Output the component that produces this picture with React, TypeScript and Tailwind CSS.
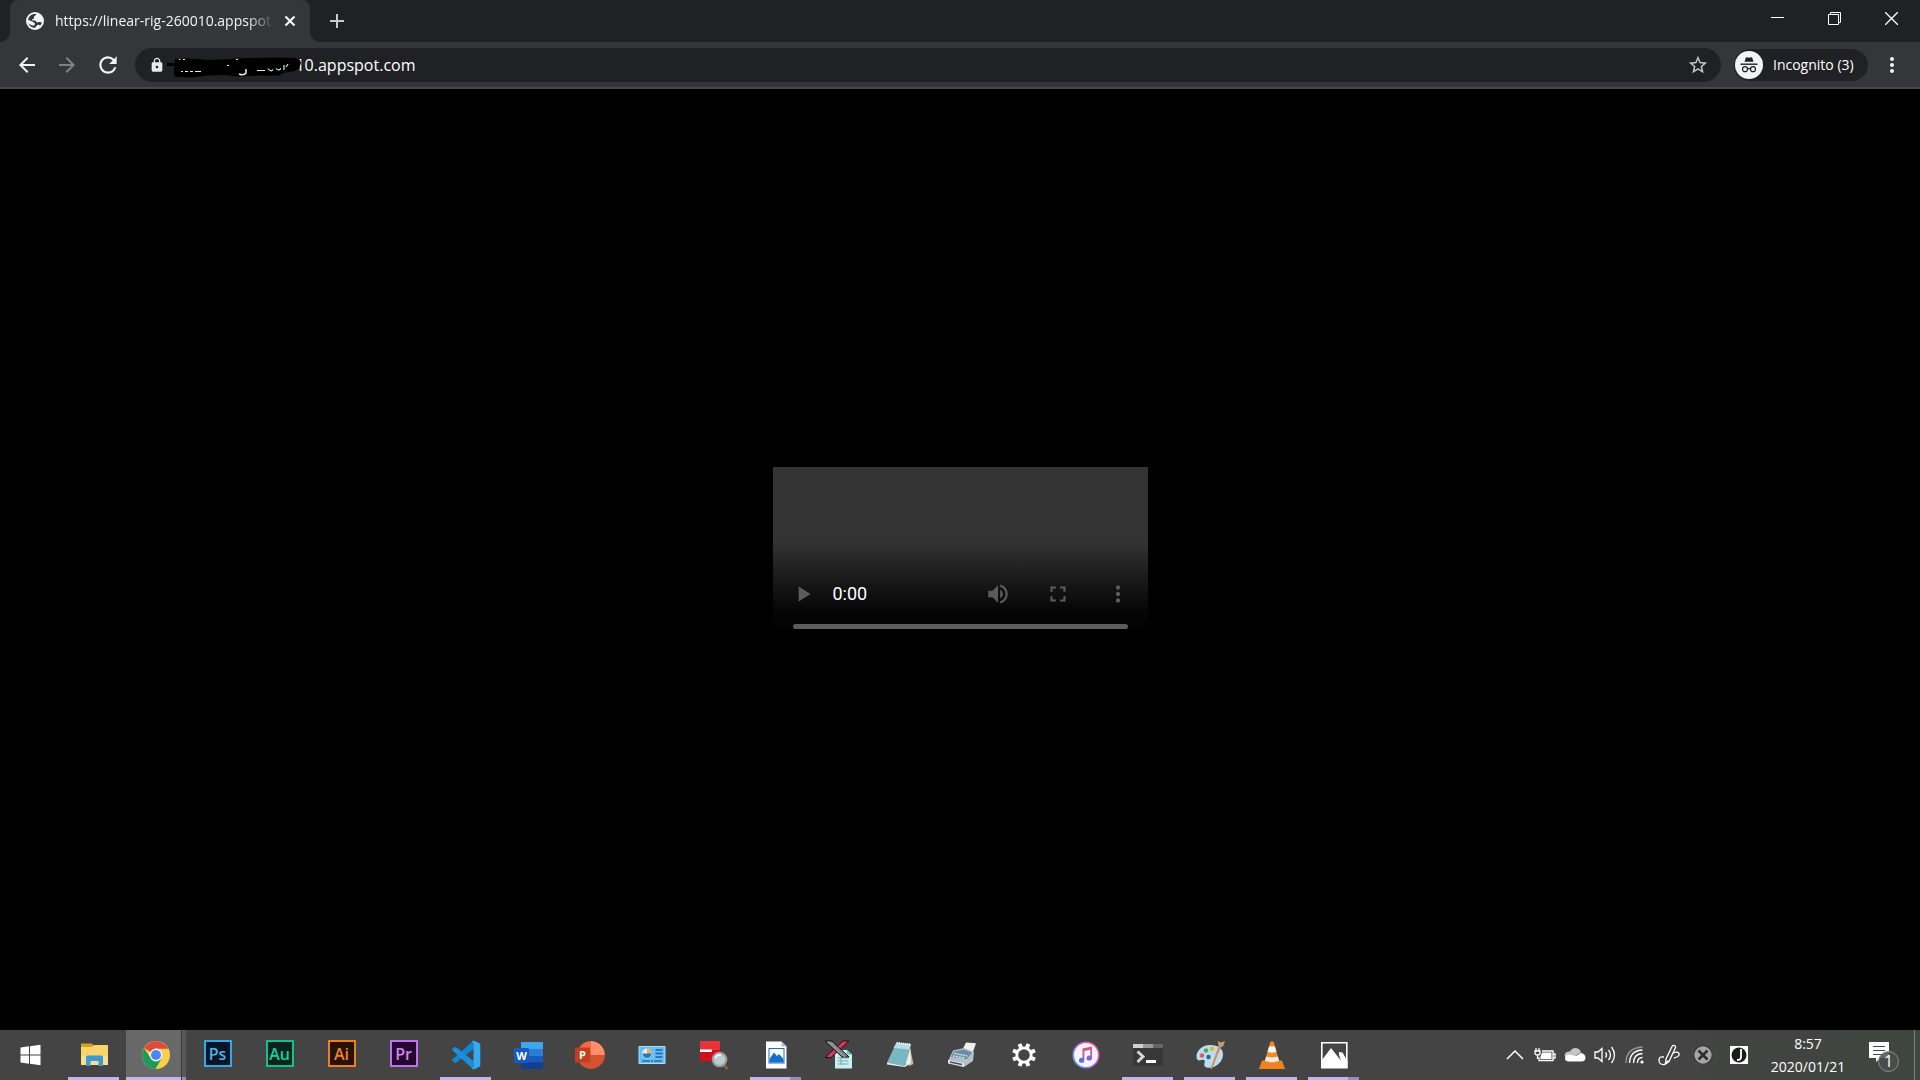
import type { ReactNode } from "react";
import {
  MdArrowBack,
  MdArrowForward,
  MdFullscreen,
  MdLock,
  MdMoreVert,
  MdPlayArrow,
  MdRefresh,
  MdStarBorder,
  MdVolumeUp,
} from "react-icons/md";

function TabCorner({ side }: { side: "left" | "right" }) {
  return (
    <span className="flex h-[10px] w-[10px] bg-[#35363a]">
      <span
        className={
          side === "left"
            ? "h-full w-full rounded-br-[10px] bg-[#202124]"
            : "h-full w-full rounded-bl-[10px] bg-[#202124]"
        }
      />
    </span>
  );
}

function GlobeIcon() {
  return (
    <svg viewBox="0 0 18 18" className="h-[18px] w-[18px] shrink-0">
      <circle cx="9" cy="9" r="9" fill="#f1f3f4" />
      <path
        d="M10.4 2.2c-.3 1.500-1.700 1.300-2.100 2.400-.3.9.4 1.300-.2 2-.6.600-1.900.2-2.100 1.200-.1.900 1.500.6 2.900.7 1.400.2 1 1.700 2.300 1.900 1.200.1 1.600-.5 2.600-.4.800.1 1.400.500 2.100.500-.3 1.200-1 2.300-1.900 3.100-.4-.8-1.100-1-1.900-.9-1 .2-1.300 1.300-2.100 1.800-.6.400-.9.900-.9 1.500-3-.1-5.600-1.900-6.500-4.500 1.600.3 3.500.4 4.400 1 .800.500 1.800.3 1.800-.6 0-1.200-1.700-1.200-2.300-1.800C5.700 9.300 3.700 8.500 2.100 8c.4-3 2.700-5.500 5.700-6 .8-.1 1.800-.1 2.600.2z"
        fill="#35363a"
      />
      <path d="M7.900 4.800l3.200-2.300 3.200 1.700 1.600 3.700-3.100.6-1.800-1.500-2.700.2z" fill="#f1f3f4" />
      <path d="M2.500 8.200l3.900 1.300 2.400 2-.8 2.200-3.300-.8-2.100-2z" fill="#f1f3f4" />
    </svg>
  );
}

function TabStrip() {
  return (
    <div className="flex h-[42px] bg-[#202124]">
      <div className="flex items-end">
        <TabCorner side="left" />
        <div className="flex h-full w-[300px] items-center rounded-t-lg bg-[#35363a] pl-4 pr-3">
          <GlobeIcon />
          <span className="ml-[11px] w-[219px] shrink-0 whitespace-nowrap text-sm text-[#f1f3f4] [mask-image:linear-gradient(to_right,black_88%,transparent)]">
            https://linear-rig-260010.appspot
          </span>
          <button aria-label="Close tab" className="ml-2 shrink-0 text-white">
            <svg viewBox="0 0 16 16" className="h-4 w-4">
              <path d="M3.500 3.500l9 9M12.500 3.500l-9 9" stroke="currentColor" strokeWidth="2" />
            </svg>
          </button>
        </div>
        <TabCorner side="right" />
      </div>
      <button aria-label="New tab" className="flex h-full w-[34px] items-center justify-center text-[#c8cacd]">
        <svg viewBox="0 0 16 16" className="h-4 w-4">
          <path d="M8 1v14M1 8h14" stroke="currentColor" strokeWidth="2" />
        </svg>
      </button>
      <div className="ml-auto flex h-[37px] text-white">
        <button aria-label="Minimize" className="flex w-[57px] items-center justify-center">
          <svg viewBox="0 0 13 13" className="h-[13px] w-[13px]">
            <path d="M0 5.500h13" stroke="currentColor" />
          </svg>
        </button>
        <button aria-label="Restore" className="flex w-[57px] items-center justify-center">
          <svg viewBox="0 0 13 13" className="h-[13px] w-[13px]" fill="none" stroke="currentColor">
            <path d="M.5 2.500h10v10H.5zM2.500 2.500v-2h10v10h-2" />
          </svg>
        </button>
        <button aria-label="Close" className="flex w-[57px] items-center justify-center">
          <svg viewBox="0 0 13 13" className="h-[13px] w-[13px]">
            <path d="M0 0l13 13M13 0L0 13" stroke="currentColor" strokeWidth="1.300" />
          </svg>
        </button>
      </div>
    </div>
  );
}

function IncognitoIcon() {
  return (
    <svg viewBox="0 0 28 28" className="h-7 w-7 shrink-0">
      <circle cx="14" cy="14" r="14" fill="#f1f3f4" />
      <path d="M9.500 10.800l1.300-4c.2-.6.700-.8 1.200-.6l2 .5 2-.5c.5-.2 1 0 1.200.6l1.300 4z" fill="#202124" />
      <path d="M5.500 13.200h17" stroke="#202124" strokeWidth="1.400" />
      <g fill="none" stroke="#202124" strokeWidth="1.200">
        <circle cx="10" cy="18.200" r="2.500" />
        <circle cx="18" cy="18.200" r="2.500" />
        <path d="M12.500 18c.8-.6 2.200-.6 3 0" />
      </g>
    </svg>
  );
}

function Toolbar() {
  return (
    <div className="flex h-[47px] items-center border-b-2 border-[#48494c] bg-[#35363a] pl-[15px] pr-4">
      <div className="flex gap-4">
        <button aria-label="Back" className="text-[#f1f3f4]">
          <MdArrowBack size={24} />
        </button>
        <button aria-label="Forward" className="text-[#7e8083]">
          <MdArrowForward size={24} />
        </button>
        <button aria-label="Reload" className="text-[#f1f3f4]">
          <MdRefresh size={26} />
        </button>
      </div>
      <div className="relative ml-[14px] flex h-[34px] flex-1 items-center rounded-full bg-[#202124] pl-[14px] pr-3">
        <MdLock size={16} className="shrink-0 text-[#e8eaed]" />
        <input
          aria-label="Address"
          defaultValue="linear-rig-260010.appspot.com"
          className="ml-[22px] min-w-0 flex-1 bg-transparent text-base text-white outline-none"
        />
        {/* marker strokes over the first part of the address */}
        <svg viewBox="0 0 140 24" className="absolute left-8 top-[6px] h-6 w-[140px]">
          <path
            d="M8 5l14-.5 18 1.500 26-1 14-1 30-.5 18 .5 5 2 1 3-2 5-4 3-12 2-4 2.500-34 .5-8 .5-12-1.500-18 .5-14 2-18-.5-1-4z"
            fill="#000"
          />
          <path d="M1 10.500h14M34 7l30 3" stroke="#000" strokeWidth="3" strokeLinecap="round" />
          <path
            d="M12 5.500h1.500M16 5.500h2M69 5.500h2M14 17.500h2M18 17.500h3M23 17.500h3M28 17.500h6M60 11.500h2M90 16.500h8M101 14.500q3 4 5 1M109 14.500q2 3 5 0M117 11v5M121 10l-2 3"
            stroke="#e8eaed"
            strokeWidth="1.200"
            fill="none"
          />
          <path d="M79 15v4q-2 3-7 1" stroke="#e8eaed" strokeWidth="1.500" fill="none" />
        </svg>
        <button aria-label="Bookmark this page" className="text-[#c8cacd]">
          <MdStarBorder size={22} />
        </button>
      </div>
      <button className="ml-[13px] flex h-8 w-[134px] items-center rounded-full bg-[#202124] pl-px text-sm text-white">
        <IncognitoIcon />
        <span className="ml-[10px] whitespace-nowrap">Incognito (3)</span>
      </button>
      <button aria-label="Menu" className="ml-3 text-[#f1f3f4]">
        <MdMoreVert size={24} />
      </button>
    </div>
  );
}

function VideoPlayer() {
  return (
    <section
      aria-label="Video player"
      className="flex h-[188px] w-[375px] flex-col justify-end bg-linear-to-b from-[#333] from-40% to-black pb-[26px]"
    >
      <div className="flex h-[60px] items-center text-[#5c5c5c]">
        <button aria-label="Play" className="flex h-full w-[60px] items-center justify-center">
          <MdPlayArrow size={26} />
        </button>
        <span className="font-['Roboto','Liberation_Sans',sans-serif] text-lg text-white">0:00</span>
        <button aria-label="Mute" className="ml-auto flex h-full w-[60px] items-center justify-center">
          <MdVolumeUp size={26} />
        </button>
        <button aria-label="Full screen" className="flex h-full w-[60px] items-center justify-center">
          <MdFullscreen size={26} />
        </button>
        <button aria-label="More options" className="flex h-full w-[60px] items-center justify-center">
          <MdMoreVert size={26} />
        </button>
      </div>
      <div className="mx-5 h-[5px] rounded-full bg-[#5c5c5c]" />
    </section>
  );
}

function AdobeIcon({ text, className }: { text: string; className: string }) {
  return (
    <span
      className={
        "mb-[3px] flex h-[27px] w-7 items-center justify-center border-2 font-['Open_Sans',sans-serif] text-base font-semibold leading-none " +
        className
      }
    >
      {text}
    </span>
  );
}

function Svg({ children }: { children: ReactNode }) {
  return (
    <svg viewBox="0 0 30 30" className="h-[30px] w-[30px]">
      {children}
    </svg>
  );
}

const startIcon = (
  <Svg>
    <path d="M4.500 7.500l8.500-1.200v8.200H4.500zM14 6.200l10.500-1.500v9.800H14zM4.500 15.500H13v8.200l-8.500-1.200zM14 15.500h10.500v9.800L14 23.800z" fill="#fff" />
  </Svg>
);

const explorerIcon = (
  <Svg>
    <path d="M2 3.500h11l2.500 3H29V14H2z" fill="#d9a01c" />
    <path d="M2 7h11l2-2h14v20H2z" fill="#f9d56b" />
    <path d="M2 16h27v9H2z" fill="#fbdf88" />
    <path d="M7 26V17q0-1.500 1.500-1.500h14Q24 15.500 24 17v9h-4.500v-5h-8v5z" fill="#3f97d3" />
  </Svg>
);

const chromeIcon = (
  <Svg>
    <circle cx="15" cy="15" r="14" fill="#f9cf4d" />
    <path d="M15 15L2.900 8A14 14 0 0 1 27.100 8L27.400 8.800H15z" fill="#dd4b3e" />
    <path d="M2.900 8A14 14 0 0 0 14.500 29L20.500 18.500 9.500 18z" fill="#1c9a58" />
    <circle cx="15" cy="15" r="6.400" fill="#f5f5f5" />
    <circle cx="15" cy="15" r="5" fill="#4a87f0" />
  </Svg>
);

const codeIcon = (
  <Svg>
    <path d="M22.500.500L1.500 19.500q-.8.800 0 1.500l2 1.700q.8.500 1.600 0L22.500 9z" fill="#1286d2" />
    <path d="M22.500 29.500L1.500 10.500q-.8-.8 0-1.500l2-1.700q.8-.5 1.600 0L22.500 21z" fill="#1a8fdc" />
    <path d="M22.500.500l6 2.800q.8.500.8 1.500v20.400q0 1-.8 1.500l-6 2.800-2-1.500q2 .5 2-1.500v-23q0-2-2-1.500z" fill="#35a9f2" />
  </Svg>
);

const wordIcon = (
  <Svg>
    <path d="M8 2h22v7H8z" fill="#41a5ee" />
    <path d="M8 9h22v7H8z" fill="#2b7cd3" />
    <path d="M8 16h22v6.500H8z" fill="#185abd" />
    <path d="M8 22.500h22V29H8z" fill="#103f91" />
    <rect x="1" y="8" width="15" height="15" rx="1" fill="#185abd" />
    <text x="8.500" y="19.500" textAnchor="middle" fontSize="11" fontWeight="700" fill="#fff">W</text>
  </Svg>
);

const pptIcon = (
  <Svg>
    <circle cx="16" cy="15" r="13.700" fill="#e2593b" />
    <path d="M16 1.300A13.700 13.700 0 0 1 29.700 15H16z" fill="#ff8f6b" />
    <path d="M2.300 15A13.700 13.700 0 0 1 16 1.300V15z" fill="#ed6c47" />
    <path d="M2.300 15h27.400A13.700 13.700 0 0 1 2.300 15z" fill="#d35230" />
    <rect x="0" y="7.500" width="15" height="15" rx="1" fill="#c43e1c" />
    <text x="7.500" y="19" textAnchor="middle" fontSize="11" fontWeight="700" fill="#fff">P</text>
  </Svg>
);

const controlPanelIcon = (
  <Svg>
    <rect x="2" y="6.500" width="26" height="17" fill="#69bdf0" stroke="#9fe0fb" />
    <circle cx="10" cy="13.500" r="5" fill="#d9f0fc" />
    <path d="M10 13.500V9a4.500 4.500 0 1 1-4.500 4.500z" fill="#2677bd" />
    <path d="M10 13.500V8.500a5 5 0 0 1 4.500 5z" fill="#e9b44c" />
    <path d="M18.500 10h7M18.500 13.500h7M18.500 17h7" stroke="#1465ad" strokeWidth="1.500" />
    <path d="M5 21h20" stroke="#2470ad" strokeWidth="1.500" strokeDasharray="8 1 2 1" />
  </Svg>
);

const redFinderIcon = (
  <Svg>
    <path d="M1 1h20v20H1z" fill="#d40e1d" />
    <path d="M1 1h20v9H1z" fill="#e8333c" />
    <path d="M1 9.500h12v2.500H1z" fill="#fff" />
    <path d="M23 23l5.500 6" stroke="#8a6246" strokeWidth="2.500" />
    <circle cx="20.500" cy="19.500" r="6.800" fill="#b9cbd0" stroke="#9b9d9f" strokeWidth="2" />
    <path d="M16 18q2-4 6-3" stroke="#edf5f6" strokeWidth="2" fill="none" />
  </Svg>
);

const imageFileIcon = (
  <Svg>
    <path d="M5 1.500h15.500l5 5v22H5z" fill="#fff" />
    <path d="M20.500 1.500l5 5h-5z" fill="#b9bcc0" />
    <rect x="8" y="8.500" width="15" height="14.500" fill="#fff" stroke="#1670cb" />
    <path d="M8.500 22.500v-3.500l4.500-6.500 3 3.500 2-2 4.500 5v3.500z" fill="#1670cb" />
  </Svg>
);

const xDocIcon = (
  <Svg>
    <path d="M12 10h12l5 4.500V28.500H12z" fill="#c9f0f3" />
    <path d="M24 10v4.500h5z" fill="#6fb7c4" />
    <path d="M14.500 18h11M14.500 21h11M14.500 24h11M18 17v8" stroke="#5c8d99" strokeWidth=".7" />
    <path d="M20 1h6L8 17.500H2z" fill="#f0305c" stroke="#151515" />
    <path d="M2 1h7l17 16h-7z" fill="#7d8585" stroke="#151515" />
    <path d="M5 1.500l17 15.500" stroke="#d0d5d5" strokeDasharray="1 1" />
  </Svg>
);

const notepadIcon = (
  <Svg>
    <path d="M24 3l4.500 21-4 2-5-4z" fill="#c9b58c" />
    <path d="M11.500 2.500L26 4l-6 22L2 22.500z" fill="#79b7c4" />
    <path d="M11.500 2.500L26 4l-1.500 5.500L8.500 8z" fill="#b9dce1" />
    <path d="M2 22.500L20 26l5.500-17.500L26 23l-6 4-18-2.500z" fill="#e4eff0" />
    <path d="M12 3l13 1.500" stroke="#eef6f6" strokeWidth="2" strokeDasharray="1 1" />
  </Svg>
);

const faxIcon = (
  <Svg>
    <path d="M19 2.500l10 .8-4 11.500-11-2z" fill="#eef2f4" />
    <path d="M6 10.500L17 8l10 4-1 9-9 6L1 21z" fill="#b4bfc6" />
    <path d="M7 11.500l10-2 8 3-5 6.500L4 17z" fill="#668ea9" />
    <path d="M7.500 13.500l13 2.500M6 16l12 2" stroke="#d5e7ef" strokeWidth="1.500" strokeDasharray="2 1" />
    <path d="M1 20l16 3v4L1 23.500z" fill="#dfe5e8" />
    <path d="M3 22l12 2.500" stroke="#4b5157" strokeWidth="1.500" />
  </Svg>
);

const settingsIcon = (
  <Svg>
    <circle cx="15" cy="15" r="7.200" fill="none" stroke="#fff" strokeWidth="2.800" />
    <path
      d="M17.800 8l1.700-4M12.200 8l-1.700-4M17.800 22l1.700 4M12.200 22l-1.700 4M8 12.200l-4-1.700M8 17.800l-4 1.700M22 12.200l4-1.700M22 17.800l4 1.700"
      stroke="#fff"
      strokeWidth="4"
    />
  </Svg>
);

const itunesIcon = (
  <Svg>
    <defs>
      <linearGradient id="ring" x1="1" y1="0" x2="0" y2="1">
        <stop offset="0" stopColor="#f45579" />
        <stop offset=".5" stopColor="#b45de0" />
        <stop offset="1" stopColor="#3cb4ef" />
      </linearGradient>
      <linearGradient id="note" x1="0" y1="0" x2="0" y2="1">
        <stop offset="0" stopColor="#f04e78" />
        <stop offset="1" stopColor="#5870e8" />
      </linearGradient>
    </defs>
    <circle cx="15" cy="15" r="12.800" fill="#f6f4fa" stroke="url(#ring)" strokeWidth="1.600" />
    <path
      d="M11.500 8.500l9.500-2v11.500a2.700 2.500 0 1 1-1.700-2.300v-6l-6 1.300v9.200a2.700 2.500 0 1 1-1.800-2.300z"
      fill="url(#note)"
    />
  </Svg>
);

const terminalIcon = (
  <Svg>
    <path d="M0 4h30v22H0z" fill="#383838" />
    <path d="M0 4h10v4H0z" fill="#d0d0d0" />
    <path d="M10 4h10v4H10z" fill="#9a9a9a" />
    <path d="M20 4h10v4H20z" fill="#666" />
    <path d="M4.500 11.500l5.500 5-5.500 5.500" fill="none" stroke="#d5d5d5" strokeWidth="3" />
    <path d="M13 21.500h10" stroke="#fff" strokeWidth="3" />
  </Svg>
);

const paintIcon = (
  <Svg>
    <path
      d="M15 5C7 5 1 11 1.500 17.500c.2 3 3 3.500 5 2.500 2.500-1 4 .5 3 3-1 3 1 5 5 4.800C22 27.500 28.500 21 28 13.500 27.500 8 22 5 15 5z"
      fill="#b9def3"
    />
    <circle cx="7" cy="15.500" r="2.200" fill="#e35b4f" />
    <circle cx="11" cy="10.500" r="2.300" fill="#4dad5b" />
    <circle cx="17" cy="8.800" r="2.300" fill="#e5b62d" />
    <circle cx="13.500" cy="17" r="2.200" fill="#355e91" />
    <path d="M15.500 28.500L23.500 6l2.500 1-9 22z" fill="#d98e4d" />
    <path d="M23 1l3 1.500L30 1l-2 5.500-4.500 1z" fill="#c89a72" />
  </Svg>
);

const vlcIcon = (
  <Svg>
    <path d="M5 20.500h20L28 29H2z" fill="#f18220" />
    <path d="M13.500 1.500h3L22.500 22q-7.500 3.500-15 0z" fill="#f58b1f" />
    <path d="M12.100 6.500h5.800l1.600 5.300q-4.500 1.800-9 0z" fill="#f4f4f4" />
    <path d="M9.200 16.500q5.800 2 11.600 0l1.300 4.300q-7 2.800-14.200 0z" fill="#e9ecec" />
  </Svg>
);

const photosIcon = (
  <Svg>
    <path d="M2.800 2.800h25v25h-25z" fill="none" stroke="#fff" strokeWidth="1.600" />
    <path d="M3 20L12 8l7.500 9.500.5-5.500 3.500.5 5 8.500v7H3z" fill="#fff" />
    <path d="M17.500 14.500l2-1.500 2.500 8z" fill="#494949" />
  </Svg>
);

type TaskApp = { name: string; icon: ReactNode; open?: boolean; stacked?: boolean; active?: boolean };

const apps: TaskApp[] = [
  { name: "File Explorer", icon: explorerIcon, open: true },
  { name: "Google Chrome", icon: chromeIcon, active: true },
  { name: "Photoshop", icon: <AdobeIcon text="Ps" className="border-[#35a8e0] bg-[#071527] text-[#4cb5e9]" /> },
  { name: "Audition", icon: <AdobeIcon text="Au" className="border-[#12c08d] bg-[#06231d] text-[#13d39a]" /> },
  { name: "Illustrator", icon: <AdobeIcon text="Ai" className="border-[#ef7f1a] bg-[#251307] text-[#f18322]" /> },
  { name: "Premiere Pro", icon: <AdobeIcon text="Pr" className="border-[#bd74e8] bg-[#25082f] text-[#cf87ef]" /> },
  { name: "Visual Studio Code", icon: codeIcon, open: true },
  { name: "Word", icon: wordIcon },
  { name: "PowerPoint", icon: pptIcon },
  { name: "Control Panel", icon: controlPanelIcon },
  { name: "Finder", icon: redFinderIcon },
  { name: "Image Viewer", icon: imageFileIcon, open: true, stacked: true },
  { name: "Document Tool", icon: xDocIcon },
  { name: "Notepad", icon: notepadIcon },
  { name: "Fax and Scan", icon: faxIcon },
  { name: "Settings", icon: settingsIcon },
  { name: "iTunes", icon: itunesIcon },
  { name: "Terminal", icon: terminalIcon, open: true },
  { name: "Paint", icon: paintIcon, open: true },
  { name: "VLC", icon: vlcIcon, open: true },
  { name: "Photos", icon: photosIcon, open: true, stacked: true },
];

function TaskButton({ app }: { app: TaskApp }) {
  if (app.active) {
    return (
      <button aria-label={app.name} className="flex w-[62px] pl-[2px]">
        <span className="flex h-full w-14 flex-col items-center border-r border-[#3a3a3a] bg-[#686868]">
          <span className="flex flex-1 items-center pl-1 pt-[3px]">{app.icon}</span>
          <span className="h-[3px] w-full bg-[#c5b2ee]" />
        </span>
        <span className="flex h-full flex-1 flex-col justify-end bg-[#585858]">
          <span className="h-[3px] w-full bg-[#9a8cba]" />
        </span>
      </button>
    );
  }
  return (
    <button aria-label={app.name} className="flex w-[62px] flex-col items-center pl-px">
      <span className="flex flex-1 items-center pt-[3px]">{app.icon}</span>
      <span className="flex h-[3px] w-[51px]">
        {app.open && <span className="flex-1 bg-[#c5b2ee]" />}
        {app.stacked && <span className="w-[11px] bg-[#9a8cba]" />}
      </span>
    </button>
  );
}

function TrayButton({ name, children }: { name: string; children: ReactNode }) {
  return (
    <button aria-label={name} className="flex h-full w-[30px] items-center justify-center">
      <svg viewBox="0 0 22 22" className="h-[22px] w-[22px]" fill="none" stroke="#fff" strokeWidth="1.300">
        {children}
      </svg>
    </button>
  );
}

function Tray() {
  return (
    <div className="ml-auto flex items-center text-white">
      <TrayButton name="Show hidden icons">
        <path d="M3 15l8-8 8 8" strokeWidth="1.500" />
      </TrayButton>
      <TrayButton name="Battery">
        <path d="M5 13v3.500h14V7H8M19 10h2v4h-2" />
        <path d="M8 8.500h9.500v6.500H6.500V12.500z" fill="#fff" stroke="none" />
        <path d="M2 4v3M5 4v3M1 7h5v2q0 2-2.500 2T1 9zM3.500 11v4" />
      </TrayButton>
      <TrayButton name="OneDrive">
        <path d="M2 13q-2-1-1-3.500Q3 7 6 7.500 8 3.500 12 4t5 4.500L8 14z" fill="#c4c4c4" stroke="none" />
        <path d="M5 17.500q-4 0-4-3.500 0-3 4-3.500l7 1.500 5-3q4 .5 4.500 4.500 0 4-4 4z" fill="#fff" stroke="none" />
      </TrayButton>
      <TrayButton name="Volume">
        <path d="M1 8h3l4-3.500v13L4 14H1zM11.500 8.500q2 2.500 0 5M14.500 6q4 5 0 10M17.500 3q6 8 0 16" />
      </TrayButton>
      <div className="mr-1 h-full">
        <TrayButton name="Wi-Fi">
          <circle cx="18" cy="18" r="1.600" fill="#fff" stroke="none" />
          <path d="M13.500 19q0-5.500 5-5.500M9.500 19q0-9 9-9.500M5.500 19Q6 6.500 18.500 6" />
          <path d="M2 19Q2 4 18.500 3" stroke="#999" />
        </TrayButton>
      </div>
      <div className="mr-1 h-full">
        <TrayButton name="Windows Ink">
          <path d="M6 13q-5-1-5 3 0 5 5 4.500 3-.5 4-4M8 15l6-12.500q1-1.500 2.500-1 1.500.8.800 2.500L11 17.500 7.500 20zM15 9q5-2 6 .5 1 3-5 4.500" />
        </TrayButton>
      </div>
      <div className="mr-1 h-full">
        <TrayButton name="Sync stopped">
          <circle cx="11" cy="11" r="9.300" fill="#a5a5a5" stroke="#3a3a3a" />
          <path d="M6.500 6.500l9 9M15.500 6.500l-9 9" stroke="#2e2e2e" strokeWidth="2.600" />
        </TrayButton>
      </div>
      <div className="ml-[2px] mr-4 h-full">
        <TrayButton name="Input method">
          <path d="M2 2h18v18H2z" fill="#fff" stroke="none" />
          <circle cx="11" cy="11" r="7.500" fill="#1c1c1c" stroke="none" />
          <path d="M13 5v8q0 3-4 3" stroke="#fff" strokeWidth="1.800" />
        </TrayButton>
      </div>
      <button className="w-[76px] whitespace-nowrap text-sm leading-[23px]">
        <span className="block">8:57</span>
        <span className="block">2020/01/21</span>
      </button>
      <button aria-label="Notifications" className="relative flex h-full w-[68px] items-center justify-center pl-2 pt-1">
        <svg viewBox="0 0 32 32" className="h-8 w-8">
          <path d="M1 1h20v16h-9l-4 4v-4H1z" fill="#fff" />
          <path d="M5 5.500h12M5 9.500h12M5 13.500h10" stroke="#454845" strokeWidth="1.200" />
          <circle cx="20.500" cy="20.500" r="10" fill="#4b4d4b" fillOpacity=".85" stroke="#8d8f8d" />
          <text x="20.500" y="26" textAnchor="middle" fontSize="16" fill="#fff">1</text>
        </svg>
      </button>
      <button aria-label="Show desktop" className="h-full w-[6px] border-l border-[#7f827f]" />
    </div>
  );
}

export default function App() {
  return (
    <div className="flex min-h-screen flex-col bg-black font-['Open_Sans','Noto_Sans',sans-serif]">
      <header>
        <TabStrip />
        <Toolbar />
      </header>
      <main className="flex flex-1 items-center justify-center pt-[2px]">
        <VideoPlayer />
      </main>
      <footer className="flex h-[50px] bg-linear-to-r from-[#444] from-85% to-[#3f453f]">
        <button aria-label="Start" className="flex w-[62px] items-center justify-center">
          {startIcon}
        </button>
        {apps.map((app) => (
          <TaskButton key={app.name} app={app} />
        ))}
        <Tray />
      </footer>
    </div>
  );
}
